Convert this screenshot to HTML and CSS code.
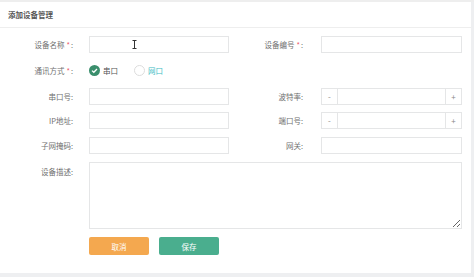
FILE: index.html
```html
<!DOCTYPE html>
<html lang="zh">
<head>
  <meta charset="UTF-8" />
  <title>添加设备管理</title>
  <link rel="stylesheet" href="styles.css">
</head>
<body>
  <div class="page">
    <div class="panel">
      <div class="panel-title">添加设备管理</div>
      <form class="form">
        <label class="lbl">设备名称 <span class="req">*</span>:</label>
        <div class="ctl cursor-host">
          <input class="ipt" type="text" />
          <svg class="ibeam" width="5" height="9" viewBox="0 0 5 9"><path d="M0.5 0.5h4M2.5 0.5v8M0.5 8.5h4" stroke="#333" stroke-width="1" fill="none"/></svg>
        </div>
        <label class="lbl lbl-r">设备编号 <span class="req">*</span>:</label>
        <div class="ctl"><input class="ipt" type="text" /></div>

        <label class="lbl">通讯方式 <span class="req">*</span>:</label>
        <div class="ctl radios">
          <span class="radio on">
            <svg width="11" height="11" viewBox="0 0 11 11"><circle cx="5.5" cy="5.5" r="5.5" fill="#3a8e6c"/><path d="M3 5.6l1.8 1.7 3.2-3.3" stroke="#fff" stroke-width="1.3" fill="none"/></svg>
            串口
          </span>
          <span class="radio off">
            <svg width="11" height="11" viewBox="0 0 11 11"><circle cx="5.5" cy="5.5" r="5" fill="#fff" stroke="#dcdcdc"/></svg>
            网口
          </span>
        </div>
        <div class="lbl lbl-r"></div>
        <div class="ctl"></div>

        <label class="lbl">串口号:</label>
        <div class="ctl"><input class="ipt" type="text" /></div>
        <label class="lbl lbl-r">波特率:</label>
        <div class="ctl spin"><span class="btn-s">-</span><input class="ipt" type="text" /><span class="btn-s">+</span></div>

        <label class="lbl">IP地址:</label>
        <div class="ctl"><input class="ipt" type="text" /></div>
        <label class="lbl lbl-r">端口号:</label>
        <div class="ctl spin"><span class="btn-s">-</span><input class="ipt" type="text" /><span class="btn-s">+</span></div>

        <label class="lbl">子网掩码:</label>
        <div class="ctl"><input class="ipt" type="text" /></div>
        <label class="lbl lbl-r">网关:</label>
        <div class="ctl"><input class="ipt" type="text" /></div>

        <label class="lbl lbl-top">设备描述:</label>
        <div class="ctl wide"><textarea class="txt"></textarea></div>

        <div class="lbl"></div>
        <div class="ctl wide actions">
          <button type="button" class="btn cancel">取消</button>
          <button type="button" class="btn save">保存</button>
        </div>
      </form>
    </div>
    <div class="side"></div>
  </div>
  <div class="foot"></div>
</body>
</html>
```
FILE: styles.css
```css
* { box-sizing: border-box; }
body { margin: 0; background: #fff; font-family: "Noto Sans CJK SC", "Noto Sans", sans-serif; font-size: 7.5px; color: #676a6c; }
.page { display: flex; height: 273px; border-top: 2px solid #eeeeee; }
.panel { width: 471px; background: #fff; }
.side { flex: 1; background: #eeeff1; }
.foot { height: 4px; background: #eeeff1; }
.panel-title { height: 26px; line-height: 26px; padding-left: 8px; color: #555; font-weight: bold; border-bottom: 1px solid #eeeeee; }

.form {
  display: grid;
  grid-template-columns: 89px 140px 92px 141px;
  grid-template-rows: 17px 21px 17px 18px 18px 68px 18px;
  row-gap: 7px;
  padding-top: 8px;
}
.lbl { display: flex; align-items: center; justify-content: flex-end; padding-right: 16px; color: #707070; height: 17px; }
.lbl-r { padding-right: 18px; }
.lbl-top { padding-top: 2px; }
.req { color: #ed5565; margin-left: 2px; margin-right: 1px; }
.ctl { display: flex; position: relative; align-self: start; }
.radios { align-self: stretch; }
.wide { grid-column: 2 / 5; }
.ipt { width: 100%; height: 17px; border: 1px solid #e5e6e7; background: #fff; padding: 0 4px; font-size: 7.5px; outline: none; }
.txt { width: 100%; height: 67px; border: 1px solid #e5e6e7; resize: vertical; outline: none; }

.spin .ipt { flex: 1; border-left: none; border-right: none; }
.btn-s { width: 17px; height: 17px; flex: none; border: 1px solid #e5e6e7; display: flex; align-items: center; justify-content: center; color: #888; font-size: 8px; }

.radios { align-items: center; }
.radio { display: inline-flex; align-items: center; gap: 3px; }
.radio.on { color: #555; width: 45px; }
.radio.off { color: #3cbcc3; }
.form > .lbl:nth-child(5) { height: 21px; }

.ibeam { position: absolute; left: 43px; top: 4px; }

.actions { gap: 10px; }
.btn { width: 60px; height: 18px; border: none; border-radius: 2px; color: #fff; font-size: 7.5px; font-family: inherit; }
.cancel { background: #f4a84f; }
.save { background: #4aae8e; }
```
